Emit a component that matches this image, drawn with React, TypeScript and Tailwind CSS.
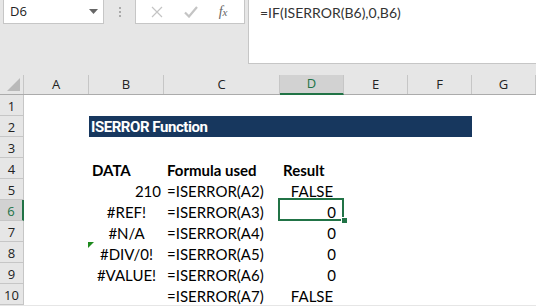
import React from 'react';

const cols = ['A', 'B', 'C', 'D', 'E', 'F', 'G'];
const colW = ['w-[65px]', 'w-[75px]', 'w-[116px]', 'w-[64px]', 'w-[64px]', 'w-[64px]', 'flex-1'];

type Row = { b?: string; bAlign?: 'right' | 'center' | 'left'; c?: string; d?: string; dAlign?: 'right' | 'center' | 'left'; bold?: boolean };

const rows: Record<number, Row> = {
  4: { b: 'DATA', bAlign: 'left', c: 'Formula used', d: 'Result', dAlign: 'left', bold: true },
  5: { b: '210', bAlign: 'right', c: '=ISERROR(A2)', d: 'FALSE', dAlign: 'center' },
  6: { b: '#REF!', bAlign: 'center', c: '=ISERROR(A3)', d: '0', dAlign: 'right' },
  7: { b: '#N/A', bAlign: 'center', c: '=ISERROR(A4)', d: '0', dAlign: 'right' },
  8: { b: '#DIV/0!', bAlign: 'center', c: '=ISERROR(A5)', d: '0', dAlign: 'right' },
  9: { b: '#VALUE!', bAlign: 'center', c: '=ISERROR(A6)', d: '0', dAlign: 'right' },
  10: { c: '=ISERROR(A7)', d: 'FALSE', dAlign: 'center' },
};

const alignCls = (a?: string) =>
  a === 'right' ? 'justify-end pr-[3px]' : a === 'center' ? 'justify-center' : 'justify-start pl-[3px]';

export default function App() {
  const cell = "font-['Lato',sans-serif] text-[15px] leading-[18px] text-black";

  return (
    <div className="w-[536px] h-[306px] overflow-hidden bg-[#e6e6e6] font-['Open_Sans',sans-serif]">
      {/* Formula bar */}
      <div className="flex items-start h-[64px]">
        <div className="ml-[3px] w-[101px] h-[24px] bg-white border border-t-0 border-[#c6c6c6] flex items-center justify-between pl-[6px] pr-[5px]">
          <span className="text-[13px] text-[#222]">D6</span>
          <svg width="9" height="5" viewBox="0 0 9 5">
            <path d="M0 0h9L4.5 5z" fill="#666" />
          </svg>
        </div>
        <div className="w-[31px] h-[24px] flex flex-col items-center justify-center gap-[2px]">
          <span className="w-[2px] h-[2px] bg-[#aaa]" />
          <span className="w-[2px] h-[2px] bg-[#aaa]" />
          <span className="w-[2px] h-[2px] bg-[#aaa]" />
        </div>
        <div className="w-[110px] h-[24px] bg-white border border-t-0 border-[#c6c6c6] flex items-center justify-around pl-[4px] pr-[6px]">
          <svg width="12" height="12" viewBox="0 0 12 12">
            <path d="M1 1l10 10M11 1L1 11" stroke="#c4c4c4" strokeWidth="1.2" />
          </svg>
          <svg width="14" height="12" viewBox="0 0 14 12">
            <path d="M1 6.5l4 4L13 1" stroke="#c4c4c4" strokeWidth="2.2" fill="none" />
          </svg>
          <span className="font-['Liberation_Serif',serif] italic text-[14px] text-[#666] leading-none">
            f<span className="text-[11px]">x</span>
          </span>
        </div>
        <div className="ml-[3px] flex-1 h-[64px] bg-white border-l border-b border-[#c6c6c6] pl-[11px] pt-[6px]">
          <span className="block font-['Lato',sans-serif] text-[14px] leading-none text-[#333]">=IF(ISERROR(B6),0,B6)</span>
        </div>
      </div>

      {/* Column headers */}
      <div className="mt-[11px] flex h-[20px] border-b border-[#ababab] text-[13px] text-[#222]">
        <div className="w-[24px] shrink-0 border-r border-[#c6c6c6] relative">
          <svg className="absolute right-[3px] bottom-[3px]" width="13" height="13" viewBox="0 0 13 13">
            <path d="M13 0V13H0z" fill="#b9b9b9" />
          </svg>
        </div>
        {cols.map((c, i) => (
          <div
            key={c}
            className={`${colW[i]} shrink-0 flex items-center justify-center border-r border-[#c6c6c6] ${
              c === 'D' ? 'bg-[#d2d2d2] text-[#217346] border-b-2 border-b-[#217346] -mb-px' : ''
            }`}
          >
            {c}
          </div>
        ))}
      </div>

      {/* Rows */}
      {Array.from({ length: 10 }, (_, i) => i + 1).map((n) => {
        const r = rows[n];
        return (
          <div key={n} className="flex h-[21px]">
            <div
              className={`w-[24px] shrink-0 border-b border-r border-[#c6c6c6] flex items-center justify-center pt-[3px] text-[13px] ${
                n === 6 ? 'bg-[#d2d2d2] text-[#217346] border-r-2 border-r-[#217346]' : 'text-[#222]'
              }`}
            >
              {n}
            </div>
            <div className="flex-1 bg-white flex">
              <div className="w-[65px] shrink-0" />
              {n === 2 ? (
                <div className="w-[383px] shrink-0 bg-[#17375e] flex items-center pl-[2px] pt-[1px]">
                  <span className="font-['Roboto',sans-serif] font-bold text-[15px] text-white tracking-[-0.45px]">
                    ISERROR Function
                  </span>
                </div>
              ) : (
                <>
                  <div className={`w-[75px] shrink-0 flex items-end relative ${alignCls(r?.bAlign)} ${cell} ${r?.bold ? 'font-bold' : ''}`}>
                    {n === 8 && (
                      <svg className="absolute -left-px top-0" width="6" height="6" viewBox="0 0 6 6">
                        <path d="M0 0H6L0 6z" fill="#1e8a1e" />
                      </svg>
                    )}
                    {r?.b}
                  </div>
                  <div className={`w-[116px] shrink-0 flex items-end ${alignCls('left')} ${cell} ${r?.bold ? 'font-bold' : ''}`}>
                    {r?.c}
                  </div>
                  <div className={`w-[64px] shrink-0 flex items-end relative ${alignCls(r?.dAlign)} ${r?.dAlign === 'right' ? 'pr-[8px]' : ''} ${cell} ${r?.bold ? 'font-bold' : ''}`}>
                    {n === 6 && (
                      <>
                        <div className="absolute -left-[2px] -top-[2px] w-[66px] h-[23px] border-2 border-[#217346]" />
                        <div className="absolute left-[61px] top-[17px] w-[7px] h-[7px] bg-[#217346] border border-white" />
                      </>
                    )}
                    {r?.d}
                  </div>
                </>
              )}
            </div>
          </div>
        );
      })}
    </div>
  );
}
